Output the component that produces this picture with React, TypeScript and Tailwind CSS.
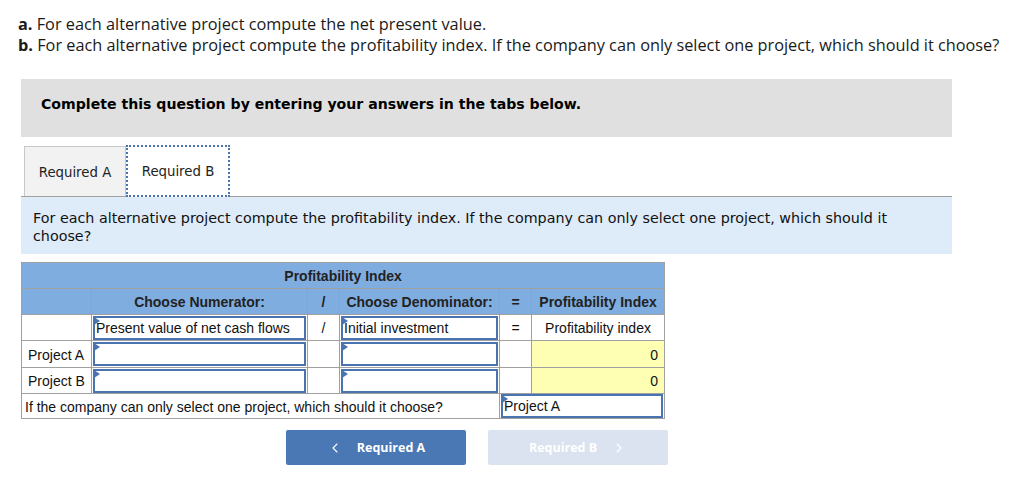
import React from "react";
import { ChevronLeft, ChevronRight } from "lucide-react";

const Tri = () => (
  <span className="absolute left-[-1px] top-[-1px] w-0 h-0 border-t-[4px] border-b-[4px] border-l-[6px] border-t-transparent border-b-transparent border-l-[#4a74b0]" />
);

function Field({ text }: { text?: string }) {
  return (
    <div className="relative h-[24px] mx-[1px] border-2 border-[#4a74b0] bg-white flex items-center pl-[1px] pt-[1px] text-left whitespace-nowrap">
      <Tri />
      {text}
    </div>
  );
}

export default function App() {
  const cell = "border border-[#a0a0a0] p-0 pt-[2px]";
  return (
    <div className="bg-white w-[1024px] h-[487px] overflow-hidden">
      <div className="pl-[18px] pt-[14px] text-[16.3px] leading-[21px] text-[#1a1a1a]" style={{ fontFamily: '"Open Sans", sans-serif' }}>
        <div><b>a.</b> For each alternative project compute the net present value.</div>
        <div><b>b.</b> For each alternative project compute the profitability index. If the company can only select one project, which should it choose?</div>
      </div>
      <div className="ml-[21px] w-[931px] mt-[23px]" style={{ fontFamily: '"DejaVu Sans", Verdana, sans-serif' }}>
        <div className="h-[58px] bg-[#e0e0e0] pl-[20px] pt-[15px] text-[14.1px] font-bold text-black">
          Complete this question by entering your answers in the tabs below.
        </div>
        <div className="mt-[9px] flex items-end h-[51px] border-b border-[#a0a0a0]">
          <div className="ml-[3px] w-[102px] h-[50px] pt-[3px] bg-[#f2f2f2] border border-b-0 border-[#c8c8c8] flex items-center justify-center text-[13.3px] text-[#222]">
            Required A
          </div>
          <div className="w-[104px] h-[52px] -mb-[1px] pt-[2px] bg-white border-2 border-dotted border-[#4a74b0] flex items-center justify-center text-[13.3px] text-[#222]">
            Required B
          </div>
        </div>
        <div className="h-[57px] bg-[#deebf8] pl-[12px] pt-[12px] text-[14.3px] leading-[18px] text-[#111] pr-[50px]">
          For each alternative project compute the profitability index. If the company can only select one project, which should it choose?
        </div>
        <table className="mt-[8px] border-collapse text-[14px] text-[#111] w-[643px] table-fixed" style={{ fontFamily: '"Liberation Sans", Arial, sans-serif' }}>
          <colgroup>
            <col style={{ width: 70 }} />
            <col style={{ width: 216 }} />
            <col style={{ width: 32 }} />
            <col style={{ width: 160 }} />
            <col style={{ width: 32 }} />
            <col style={{ width: 133 }} />
          </colgroup>
          <tbody>
            <tr className="h-[26px] bg-[#80ade0] font-bold text-[#222]">
              <td colSpan={6} className={`${cell} text-center`}>Profitability Index</td>
            </tr>
            <tr className="h-[26px] bg-[#80ade0] font-bold text-[#222]">
              <td className={cell}></td>
              <td className={`${cell} text-center`}>Choose Numerator:</td>
              <td className={`${cell} text-center`}>/</td>
              <td className={`${cell} text-center`}>Choose Denominator:</td>
              <td className={`${cell} text-center`}>=</td>
              <td className={`${cell} text-center`}>Profitability Index</td>
            </tr>
            <tr className="h-[26px]">
              <td className={cell}></td>
              <td className="border border-[#a0a0a0] p-0"><Field text="Present value of net cash flows" /></td>
              <td className={`${cell} text-center`}>/</td>
              <td className="border border-[#a0a0a0] p-0"><Field text="Initial investment" /></td>
              <td className={`${cell} text-center`}>=</td>
              <td className={`${cell} text-center`}>Profitability index</td>
            </tr>
            <tr className="h-[27px]">
              <td className={`${cell} pl-[6px] whitespace-nowrap`}>Project A</td>
              <td className="border border-[#a0a0a0] p-0"><Field /></td>
              <td className={cell}></td>
              <td className="border border-[#a0a0a0] p-0"><Field /></td>
              <td className={cell}></td>
              <td className={`${cell} bg-[#ffffb3] text-right pr-[6px]`}>0</td>
            </tr>
            <tr className="h-[26px]">
              <td className={`${cell} pl-[6px] whitespace-nowrap`}>Project B</td>
              <td className="border border-[#a0a0a0] p-0"><Field /></td>
              <td className={cell}></td>
              <td className="border border-[#a0a0a0] p-0"><Field /></td>
              <td className={cell}></td>
              <td className={`${cell} bg-[#ffffb3] text-right pr-[6px]`}>0</td>
            </tr>
            <tr className="h-[25px]">
              <td colSpan={4} className={`${cell} pl-[3px] whitespace-nowrap`}>If the company can only select one project, which should it choose?</td>
              <td colSpan={2} className="border border-[#a0a0a0] p-0"><Field text="Project A" /></td>
            </tr>
          </tbody>
        </table>
      </div>
      <div className="mt-[11px] ml-[286px] flex gap-[22px]" style={{ fontFamily: '"Open Sans", sans-serif' }}>
        <div className="w-[180px] h-[35px] rounded-[2px] bg-[#4a78b4] text-white text-[12.5px] font-bold flex items-center justify-center gap-[14px] pt-[1px]">
          <ChevronLeft size={16} strokeWidth={1.6} />
          <span>Required A</span>
        </div>
        <div className="w-[180px] h-[35px] rounded-[2px] bg-[#dae3ef] text-white text-[12.5px] font-bold flex items-center justify-center gap-[14px] pt-[1px]">
          <span>Required B</span>
          <ChevronRight size={16} strokeWidth={1.6} />
        </div>
      </div>
    </div>
  );
}
